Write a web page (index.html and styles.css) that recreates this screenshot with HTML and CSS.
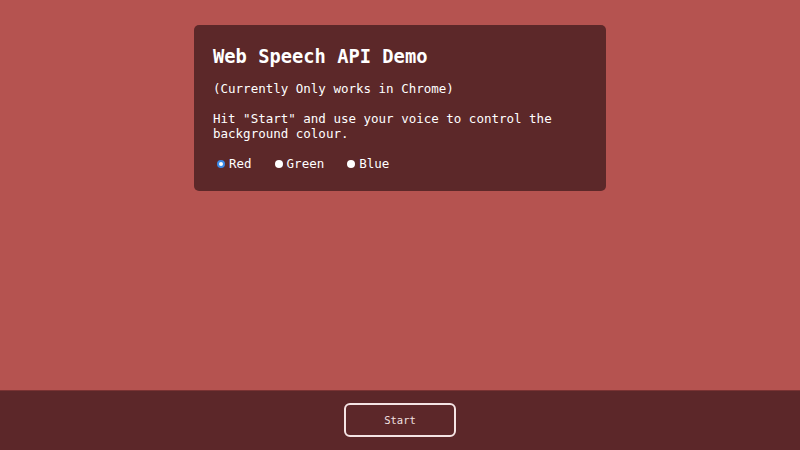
FILE: index.html
```html
<!DOCTYPE html>
<html lang="en">
<head>
    <meta charset="UTF-8">
    <meta name="viewport" content="width=device-width, initial-scale=1.0">
    <title>Web Speech API Demo</title>
    <link rel="stylesheet" href="styles.css">
</head>
<body>
    <main class="page">
        <div class="card">
            <h1>Web Speech API Demo</h1>
            <p class="note">(Currently Only works in Chrome)</p>
            <p>Hit "Start" and use your voice to control the background colour.</p>

            <div class="colours">
                <label class="colour"><input type="radio" name="colour" value="red" checked> Red</label>
                <label class="colour"><input type="radio" name="colour" value="green"> Green</label>
                <label class="colour"><input type="radio" name="colour" value="blue"> Blue</label>
            </div>
        </div>
    </main>

    <footer class="controls">
        <button class="start">Start</button>
    </footer>
</body>
</html>
```

FILE: styles.css
```css
* {
    margin: 0;
    padding: 0;
    box-sizing: border-box;
}

body {
    font-family: 'DejaVu Sans Mono', monospace;
    font-size: 12.5px;
    background-color: #b55350;
    color: #fff;
    display: flex;
    flex-direction: column;
    height: 100vh;
}

.page {
    flex: 1;
}

.card {
    width: 412px;
    margin: 25px auto 0;
    padding: 21px 19px 19px;
    background-color: #5c2829;
    border-radius: 5px;
}

h1 {
    font-size: 18.75px;
    line-height: 22px;
}

p {
    line-height: 15px;
    margin-top: 15px;
}

p.note {
    margin-top: 13px;
}

.colours {
    display: flex;
    gap: 23px;
    margin-top: 15px;
    padding-left: 4px;
    line-height: 16px;
}

.colour {
    display: flex;
    align-items: center;
    gap: 4px;
}

.colour input {
    appearance: none;
    width: 8px;
    height: 8px;
    border-radius: 50%;
    background-color: #fff;
}

.colour input:checked {
    border: 2px solid #3a8ae8;
}

.controls {
    height: 60px;
    background-color: #5c2729;
    border-top: 1px solid #7a3333;
    display: flex;
    justify-content: center;
    align-items: center;
}

.start {
    width: 112px;
    height: 34px;
    margin-top: -1px;
    background: transparent;
    border: 2px solid #f5e4e4;
    border-radius: 6px;
    color: #f3e2e2;
    font-family: 'DejaVu Sans Mono', monospace;
    font-size: 10.5px;
    cursor: pointer;
}
```
